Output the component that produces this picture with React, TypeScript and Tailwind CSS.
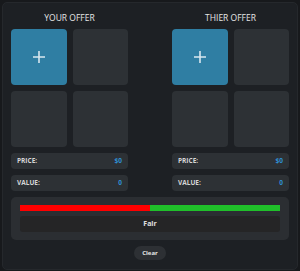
import React from "react";

function Plus() {
  return (
    <svg width="14" height="14" viewBox="0 0 14 14">
      <path d="M7 1V13M1 7H13" stroke="#d9e7ef" strokeWidth="1.6" />
    </svg>
  );
}

function Side({ title }: { title: string }) {
  return (
    <div className="flex flex-col w-[117px]">
      <div className="h-[14px] leading-[14px] text-center text-[8.5px] text-[#e6e6e6] mb-[4px]">{title}</div>
      <div className="grid grid-cols-2 gap-[6px]">
        <div className="h-[56px] rounded-[4px] bg-[#2f7ea3] flex items-center justify-center">
          <Plus />
        </div>
        <div className="h-[56px] rounded-[4px] bg-[#2d3135]" />
        <div className="h-[56px] rounded-[4px] bg-[#2d3135]" />
        <div className="h-[56px] rounded-[4px] bg-[#2d3135]" />
      </div>
      <div className="mt-[6px] h-[16px] rounded-[4px] bg-[#2d3135] flex items-center justify-between px-[6px]">
        <span className="text-[6.5px] font-bold text-[#d6d6d6]">PRICE:</span>
        <span className="text-[6.5px] font-bold text-[#2f8fd2]">$0</span>
      </div>
      <div className="mt-[6px] h-[16px] rounded-[4px] bg-[#2d3135] flex items-center justify-between px-[6px]">
        <span className="text-[6.5px] font-bold text-[#d6d6d6]">VALUE:</span>
        <span className="text-[6.5px] font-bold text-[#2f8fd2]">0</span>
      </div>
    </div>
  );
}

export default function App() {
  return (
    <div className="w-[300px] h-[271px] bg-[#17191c] p-[2px]" style={{ fontFamily: '"Open Sans", "Noto Sans", sans-serif' }}>
      <div className="w-[296px] h-[268px] rounded-[5px] border border-[#25282c] bg-[#1d2024] px-[8px] pt-[8px] flex flex-col">
        <div className="flex justify-between">
          <Side title="YOUR OFFER" />
          <Side title="THIER OFFER" />
        </div>
        <div className="mt-[6px] rounded-[5px] bg-[#2b2e32] px-[9px] pt-[8px] pb-[8px] flex flex-col">
          <div className="flex h-[6px]">
            <div className="w-[130px] bg-[#ff0000]" />
            <div className="flex-1 bg-[#20c02a]" />
          </div>
          <div className="mt-[5px] h-[16px] rounded-[3px] bg-[#252526] flex items-center justify-center text-[7px] font-bold text-[#e0e0e0]">
            Fair
          </div>
        </div>
        <div className="mt-[6px] flex justify-center">
          <div className="h-[14px] w-[32px] rounded-full bg-[#2d3034] flex items-center justify-center text-[6px] font-bold text-[#e6e6e6]">
            Clear
          </div>
        </div>
      </div>
    </div>
  );
}
